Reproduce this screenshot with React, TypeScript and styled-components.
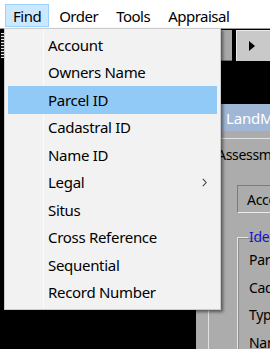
import React from "react";
import styled, { createGlobalStyle } from "styled-components";

const GlobalStyle = createGlobalStyle`
  html, body {
    margin: 0;
    padding: 0;
    background: #000;
  }
  body {
    width: 270px;
    height: 349px;
    overflow: hidden;
    font-family: "Noto Sans", "Open Sans", sans-serif;
  }
`;

const Screen = styled.div`
  position: relative;
  width: 270px;
  height: 349px;
  overflow: hidden;
  background: #000;
  display: flex;
  flex-direction: column;
  font-family: "Noto Sans", "Open Sans", sans-serif;
  color: #000;
`;

/* ---------- Main menu bar ---------- */
const MenuBar = styled.div`
  flex: none;
  height: 28px;
  box-sizing: border-box;
  background: #fff;
  display: flex;
  gap: 2px;
  padding-left: 5px;
`;

const MenuBarItem = styled.div<{ $open?: boolean }>`
  margin-top: 4px;
  height: 23px;
  box-sizing: border-box;
  padding: 0 7px;
  border: 1px solid ${(p) => (p.$open ? "#99d1ff" : "transparent")};
  background: ${(p) => (p.$open ? "#cce8ff" : "transparent")};
  display: flex;
  align-items: center;
  font-size: 15px;
  letter-spacing: -0.5px;
  white-space: nowrap;
`;

/* ---------- Tool strip behind the menu ---------- */
const Toolbar = styled.div`
  flex: none;
  height: 36px;
  box-sizing: border-box;
  display: flex;
  background: #000;
  border-top: 1px solid #9c9c9c;
`;

const Grip = styled.div`
  width: 3px;
  margin: 4px 0 6px 1px;
  background: repeating-linear-gradient(to bottom, #e8e8e8 0 1px, #202020 1px 3px);
`;

const ToolFill = styled.div`
  flex: 1;
  margin: 1px 0 3px;
  background: #a8a8a8;
  border-bottom: 1px solid #6a6a6a;
`;

const ToolSeparator = styled.div`
  width: 4px;
  background: #000;
`;

const NavButton = styled.div`
  width: 34px;
  margin: 1px 0 3px;
  box-sizing: border-box;
  background: #c9c9c9;
  border-top: 1px solid #ececec;
  border-left: 1px solid #ececec;
  display: flex;
  align-items: center;
  justify-content: center;
  padding-right: 3px;
`;

/* ---------- MDI workspace ---------- */
const Workspace = styled.div`
  flex: 1;
  position: relative;
  background: #000;
`;

const ChildWindow = styled.div`
  position: absolute;
  left: 196px;
  top: 40px;
  width: 200px;
  height: 320px;
  background: #acacac;
  display: flex;
  flex-direction: column;
`;

const TitleBar = styled.div`
  flex: none;
  height: 27px;
  background: #9fb7d5;
  color: #fff;
  font-size: 15px;
  letter-spacing: -0.2px;
  display: flex;
  align-items: center;
  padding-left: 30px;
  white-space: nowrap;
`;

const Panel = styled.div`
  margin: 7px 0 0 12px;
  flex: 1;
  border-top: 1px solid #e2e2e2;
  border-left: 1px solid #e2e2e2;
  padding-left: 8px;
  display: flex;
  flex-direction: column;
  align-items: flex-start;
  font-size: 14px;
  letter-spacing: -0.3px;
  white-space: nowrap;
`;

const SectionLabel = styled.div`
  margin-top: 6px;
  line-height: 20px;
`;

const FieldBox = styled.div`
  margin: 20px 0 0 20px;
  width: 100px;
  height: 28px;
  box-sizing: border-box;
  border-top: 1px solid #7c7c7c;
  border-left: 1px solid #7c7c7c;
  border-bottom: 1px solid #ececec;
  border-right: 1px solid #ececec;
  padding-left: 9px;
  display: flex;
  align-items: center;
`;

const Group = styled.fieldset`
  margin: 15px 0 0 20px;
  width: 100px;
  padding: 0 0 0 10px;
  border: 1px solid #e6e6e6;
  box-shadow: inset 1px 1px 0 #8e8e8e;
`;

const GroupLegend = styled.legend`
  padding: 0 1px;
  line-height: 18px;
  color: #1414c8;
`;

const GroupRow = styled.div`
  height: 27.5px;
  display: flex;
  align-items: center;
  padding-left: 1px;
`;

/* ---------- Open dropdown ---------- */
const Dropdown = styled.div`
  position: absolute;
  left: 4px;
  top: 28px;
  width: 217px;
  box-sizing: border-box;
  background: #f2f2f2;
  border: 1px solid #cccccc;
  padding: 2px 3px 3px;
  box-shadow: 2px 2px 3px rgba(0, 0, 0, 0.5);
  z-index: 10;
  &::before {
    content: "";
    position: absolute;
    left: 38px;
    top: 0;
    bottom: 0;
    width: 1px;
    background: #fbfbfb;
  }
`;

const DropItem = styled.div<{ $active?: boolean }>`
  position: relative;
  height: 27.5px;
  padding-left: 40px;
  display: flex;
  align-items: center;
  font-size: 15px;
  letter-spacing: -0.3px;
  background: ${(p) => (p.$active ? "#91c9f7" : "transparent")};
  white-space: nowrap;
`;

const SubArrow = styled.svg`
  margin-left: auto;
  margin-right: 10px;
`;

const items: { label: string; active?: boolean; sub?: boolean }[] = [
  { label: "Account" },
  { label: "Owners Name" },
  { label: "Parcel ID", active: true },
  { label: "Cadastral ID" },
  { label: "Name ID" },
  { label: "Legal", sub: true },
  { label: "Situs" },
  { label: "Cross Reference" },
  { label: "Sequential" },
  { label: "Record Number" },
];

export default function App() {
  return (
    <>
      <GlobalStyle />
      <Screen>
        <MenuBar>
          <MenuBarItem $open>Find</MenuBarItem>
          <MenuBarItem>Order</MenuBarItem>
          <MenuBarItem>Tools</MenuBarItem>
          <MenuBarItem>Appraisal</MenuBarItem>
        </MenuBar>
        <Toolbar>
          <Grip />
          <ToolFill />
          <ToolSeparator />
          <NavButton>
            <svg width="6" height="10" viewBox="0 0 6 10">
              <path d="M0 0 L6 5 L0 10 Z" fill="#000" />
            </svg>
          </NavButton>
        </Toolbar>
        <Workspace>
          <ChildWindow>
            <TitleBar>LandMark</TitleBar>
            <Panel>
              <SectionLabel>Assessment</SectionLabel>
              <FieldBox>Account</FieldBox>
              <Group>
                <GroupLegend>Identification</GroupLegend>
                <GroupRow>Parcel ID</GroupRow>
                <GroupRow>Cadastral ID</GroupRow>
                <GroupRow>Type</GroupRow>
                <GroupRow>Name</GroupRow>
              </Group>
            </Panel>
          </ChildWindow>
        </Workspace>
        <Dropdown>
          {items.map((it) => (
            <DropItem key={it.label} $active={it.active}>
              {it.label}
              {it.sub && (
                <SubArrow width="5" height="9" viewBox="0 0 5 9">
                  <path d="M0.8 0.8 L4.2 4.5 L0.8 8.2" fill="none" stroke="#444" strokeWidth="1.1" />
                </SubArrow>
              )}
            </DropItem>
          ))}
        </Dropdown>
      </Screen>
    </>
  );
}
